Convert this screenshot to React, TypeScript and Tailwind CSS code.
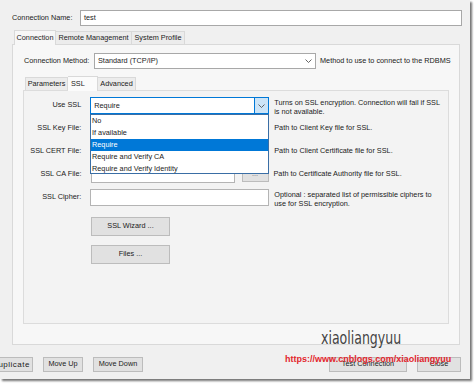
import type { ReactNode } from 'react';

function Chevron({ className = '' }: { className?: string }) {
  return (
    <svg width="7" height="4" viewBox="0 0 7 4" className={className}>
      <path d="M0.5 0.5 L3.5 3.5 L6.5 0.5" fill="none" stroke="#555" strokeWidth="0.9" />
    </svg>
  );
}

function Btn({ children, className = '' }: { children: ReactNode; className?: string }) {
  return (
    <div
      className={`flex items-center justify-center bg-[#e1e1e1] border border-[#bcbcbc] text-[#222] ${className}`}
    >
      {children}
    </div>
  );
}

function Row({ label, children, desc }: { label: string; children: ReactNode; desc?: ReactNode }) {
  return (
    <div className="flex h-[23px] shrink-0">
      <div className="w-[58px] h-[17px] leading-[16px] text-right">{label}</div>
      <div className="ml-[9px] w-[179px] flex">{children}</div>
      <div className="ml-[5px] w-[176px]">{desc}</div>
    </div>
  );
}

function Input({ className = 'w-[179px]' }: { className?: string }) {
  return <div className={`h-[17px] bg-white border border-[#b4b4b4] ${className}`} />;
}

export default function App() {
  const sslOptions = ['No', 'If available', 'Require', 'Require and Verify CA', 'Require and Verify Identity'];

  return (
    <div className="w-[474px] h-[392px] bg-white overflow-hidden font-['Liberation_Sans',Arial,sans-serif] text-[7.3px] text-[#1b1b1b]">
      <div className="relative w-[470px] h-[379px] bg-[#f0f0f0] shadow-[2px_2px_2px_rgba(0,0,0,0.55)] overflow-hidden">
        <div className="flex flex-col pt-[10px] pl-[12px]">
          {/* Connection name */}
          <div className="flex items-center h-[16px]">
            <div className="w-[68px]">Connection Name:</div>
            <div className="w-[382px] h-[16px] bg-white border border-[#a8a8a8] pl-[3px] leading-[14px]">test</div>
          </div>

          {/* Top tabs */}
          <div className="flex items-end h-[15px] mt-[4px] ml-[2px]">
            <div className="h-[15px] w-[42px] flex items-center justify-center bg-[#f7f7f7] border border-b-0 border-[#d9d9d9] relative z-10">
              Connection
            </div>
            <div className="h-[14px] w-[76px] flex items-center justify-center bg-[#ececec] border border-b-0 border-l-0 border-[#d9d9d9]">
              Remote Management
            </div>
            <div className="h-[14px] w-[53px] flex items-center justify-center bg-[#ececec] border border-b-0 border-l-0 border-[#d9d9d9]">
              System Profile
            </div>
          </div>

          {/* Connection panel */}
          <div className="-mt-px w-[448px] h-[301px] bg-[#f7f7f7] border border-[#d9d9d9] pt-[8px] pl-[10px]">
            <div className="flex items-center h-[16px]">
              <div className="w-[71px] pl-[1px]">Connection Method:</div>
              <div className="w-[222px] h-[16px] bg-white border border-[#a8a8a8] pl-[3px] flex items-center justify-between pr-[3px]">
                <span>Standard (TCP/IP)</span>
                <Chevron />
              </div>
              <div className="ml-[4px]">Method to use to connect to the RDBMS</div>
            </div>

            {/* Inner tabs */}
            <div className="flex items-end h-[15px] mt-[7px] ml-[2px]">
              <div className="h-[14px] w-[43px] flex items-center justify-center bg-[#ececec] border border-b-0 border-[#d9d9d9]">
                Parameters
              </div>
              <div className="h-[15px] w-[30px] flex items-center pl-[3px] bg-[#fbfbfb] border border-b-0 border-l-0 border-[#d9d9d9] relative z-10">
                SSL
              </div>
              <div className="h-[14px] w-[38px] flex items-center justify-center bg-[#ececec] border border-b-0 border-l-0 border-[#d9d9d9]">
                Advanced
              </div>
            </div>

            {/* SSL panel */}
            <div className="relative -mt-px w-[426px] h-[234px] bg-[#f3f3f3] border border-[#dcdcdc] pt-[6px] flex flex-col">
              <Row
                label="Use SSL"
                desc={
                  <div className="leading-[9px] pt-[1px]">
                    Turns on SSL encryption. Connection will fail if SSL
                    <br />
                    is not available.
                  </div>
                }
              >
                <div className="w-[179px] h-[17px] bg-white border border-[#0078d7] flex">
                  <div className="flex-1 pl-[3px] leading-[15px]">Require</div>
                  <div className="w-[14px] h-full bg-[#cce4f7] border-l border-[#0078d7] flex items-center justify-center">
                    <Chevron />
                  </div>
                </div>
              </Row>
              <Row label="SSL Key File:" desc={<div className="leading-[16px]">Path to Client Key file for SSL.</div>}>
                <Input />
              </Row>
              <Row label="SSL CERT File:" desc={<div className="leading-[16px]">Path to Client Certificate file for SSL.</div>}>
                <Input />
              </Row>
              <Row label="SSL CA File:" desc={<div className="leading-[16px]">Path to Certificate Authority file for SSL.</div>}>
                <Input className="w-[144px]" />
                <Btn className="ml-[7px] w-[27px] h-[16px] text-[#666]">...</Btn>
              </Row>
              <Row
                label="SSL Cipher:"
                desc={
                  <div className="leading-[9px] pt-[1px]">
                    Optional : separated list of permissible ciphers to
                    <br />
                    use for SSL encryption.
                  </div>
                }
              >
                <Input />
              </Row>

              <div className="ml-[67px] mt-[5px] flex flex-col gap-[9px]">
                <Btn className="w-[79px] h-[19px]">SSL Wizard ...</Btn>
                <Btn className="w-[79px] h-[19px]">Files ...</Btn>
              </div>

              {/* Open dropdown list */}
              <div className="absolute left-[66px] top-[23px] w-[179px] h-[60px] bg-white border border-[#3a6ea5] flex flex-col">
                {sslOptions.map((opt) => (
                  <div
                    key={opt}
                    className={`h-[12px] leading-[12px] pl-[1px] ${opt === 'Require' ? 'bg-[#0078d7] text-white' : ''}`}
                  >
                    {opt}
                  </div>
                ))}
              </div>
            </div>
          </div>

          {/* Bottom buttons */}
          <div className="flex items-center justify-between mt-[12px] -ml-[12px] pr-[9px] h-[15px]">
            <div className="flex gap-[10px]">
              <Btn className="-ml-[22px] w-[55px] h-[15px] justify-end pr-[2px] text-[8px] tracking-[0.5px] whitespace-nowrap">
                Duplicate
              </Btn>
              <Btn className="w-[40px] h-[15px]">Move Up</Btn>
              <Btn className="w-[50px] h-[15px]">Move Down</Btn>
            </div>
            <div className="flex gap-[10px]">
              <Btn className="w-[78px] h-[15px]">Test Connection</Btn>
              <Btn className="w-[44px] h-[15px]">Close</Btn>
            </div>
          </div>
        </div>

        {/* Watermarks */}
        <div className="absolute left-[321px] top-[330px] text-[17px] leading-none text-[#444] font-['DejaVu_Sans_Condensed','DejaVu_Sans',sans-serif] font-light scale-x-[0.82] origin-left">
          xiaoliangyuu
        </div>
        <div className="absolute left-[285px] top-[355px] text-[9px] leading-none font-bold text-[#e3262c] font-['Liberation_Sans',Arial,sans-serif]">
          https://www.cnblogs.com/xiaoliangyuu
        </div>
      </div>
    </div>
  );
}
